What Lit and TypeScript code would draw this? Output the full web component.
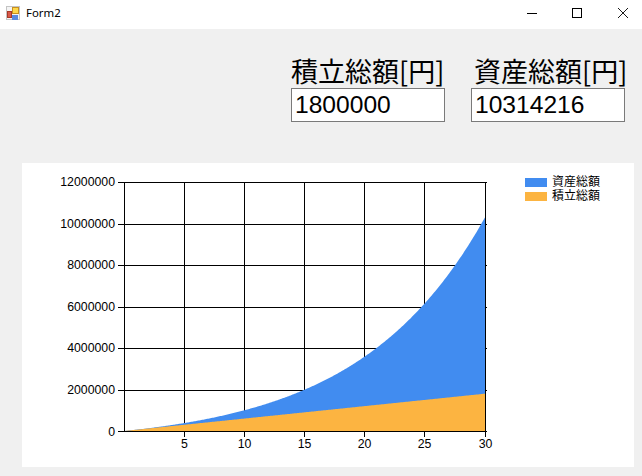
import { LitElement, html, css, svg } from "lit";
import { customElement } from "lit/decorators.js";

const X0 = 124;
const XS = 60.2 / 5;
const Y0 = 431;
const YS = 249 / 12000000;
const px = (v: number) => X0 + v * XS;
const py = (v: number) => Y0 - v * YS;
const rate = Math.pow(1.1, 1 / 12) - 1;

function area(fn: (m: number) => number): string {
  let d = `M${px(0)} ${Y0}`;
  for (let m = 0; m <= 360; m++) d += `L${px(m / 12).toFixed(2)} ${py(fn(m)).toFixed(2)}`;
  return d + `L${px(30)} ${Y0}Z`;
}

const assets = area((m) => (5000 * (Math.pow(1 + rate, m) - 1)) / rate);
const saved = area((m) => 5000 * m);
const xLines = [184, 244, 304, 364, 424, 485];
const xLabels = [5, 10, 15, 20, 25, 30];
const yLines: [number, number, number][] = [
  [0, 431, 436],
  [2000000, 390, 394],
  [4000000, 348, 352],
  [6000000, 307, 311],
  [8000000, 265, 269],
  [10000000, 224, 228],
  [12000000, 182, 186],
];

@customElement("app-root")
export class AppRoot extends LitElement {
  static styles = css`
    :host {
      display: flex;
      flex-direction: column;
      width: 642px;
      height: 476px;
      background: #f0f0f0;
      overflow: hidden;
    }
    .titlebar {
      display: flex;
      align-items: flex-start;
      height: 29px;
      flex: none;
      background: #fff;
      padding-left: 6px;
      box-sizing: border-box;
    }
    .app-icon {
      width: 14px;
      height: 14px;
      margin-top: 6px;
      display: block;
    }
    .title {
      margin-left: 6px;
      margin-top: 5px;
      font: 11.4px/16px "Noto Sans", "Open Sans", sans-serif;
      color: #000;
    }
    .controls {
      margin-left: auto;
      margin-right: -4px;
      display: flex;
    }
    .ctl {
      width: 46px;
      height: 26px;
      display: flex;
      align-items: center;
      justify-content: center;
    }
    .ctl:first-child {
      width: 44px;
    }
    .ctl svg {
      display: block;
    }
    .summary {
      display: flex;
      justify-content: flex-end;
      gap: 26px;
      padding: 26px 17px 0 0;
      height: 134px;
      box-sizing: border-box;
      flex: none;
    }
    .field {
      width: 154px;
      display: flex;
      flex-direction: column;
    }
    .label {
      height: 33px;
      font: 27px/31px "Noto Sans CJK JP", sans-serif;
      color: #000;
      white-space: nowrap;
    }
    .field:last-child .label {
      padding-left: 3px;
    }
    .value {
      height: 34px;
      box-sizing: border-box;
      border: 1px solid #7a7a7a;
      background: #fff;
      font: 24.6px/32px "Liberation Sans", Arial, sans-serif;
      color: #000;
      padding-left: 3px;
    }
    .card {
      margin-left: 22px;
      width: 612px;
      height: 304px;
      background: #fff;
      flex: none;
    }
    .card svg {
      display: block;
    }
    .axis {
      font: 12.3px "Liberation Sans", Arial, sans-serif;
      fill: #000;
    }
    .legend {
      font: 12px "Noto Sans CJK JP", sans-serif;
      fill: #000;
    }
  `;

  render() {
    return html`
      <div class="titlebar">
        <svg class="app-icon" viewBox="0 0 14 14">
          <rect x="0" y="0" width="14" height="14" fill="#c4c4c4" />
          <rect x="1" y="1" width="12" height="12" fill="#f4f4f4" />
          <rect x="6" y="1" width="7" height="7" fill="#c89020" />
          <rect x="7" y="2" width="5" height="5" fill="#ffd84a" />
          <rect x="1" y="5" width="5" height="7" fill="#a83a28" />
          <rect x="2" y="6" width="3" height="5" fill="#d8584a" />
          <rect x="6" y="9" width="6" height="5" fill="#5a8ae0" />
        </svg>
        <span class="title">Form2</span>
        <div class="controls">
          <div class="ctl">
            <svg width="10" height="10" viewBox="0 0 10 10"><path d="M0 5.5H10" stroke="#000" fill="none" /></svg>
          </div>
          <div class="ctl">
            <svg width="10" height="10" viewBox="0 0 10 10"><rect x=".5" y=".5" width="9" height="9" stroke="#000" fill="none" /></svg>
          </div>
          <div class="ctl">
            <svg width="10" height="10" viewBox="0 0 10 10"><path d="M0 0L10 10M10 0L0 10" stroke="#000" stroke-width=".9" fill="none" /></svg>
          </div>
        </div>
      </div>
      <div class="summary">
        <div class="field">
          <div class="label">積立総額[円]</div>
          <div class="value">1800000</div>
        </div>
        <div class="field">
          <div class="label">資産総額[円]</div>
          <div class="value">10314216</div>
        </div>
      </div>
      <div class="card">
        <svg width="612" height="304" viewBox="22 163 612 304">
          ${yLines.map(
            ([v, y, b]) => svg`
              <path d="M118 ${y + 0.5}H487" stroke="#000" fill="none" />
              <text class="axis" x="115" y="${b}" text-anchor="end">${v}</text>`
          )}
          ${xLines.map(
            (x, i) => svg`
              <path d="M${x + 0.5} 182V437" stroke="#000" fill="none" />
              <text class="axis" x="${x + 0.5}" y="448" text-anchor="middle">${xLabels[i]}</text>`
          )}
          <path d="${assets}" fill="#418cf0" />
          <path d="${saved}" fill="#fcb441" />
          <path d="M124.5 182V431.5H485.5V217" stroke="#000" fill="none" />
          <rect x="525" y="178" width="22" height="9" fill="#418cf0" />
          <rect x="525" y="192" width="22" height="9" fill="#fcb441" />
          <text class="legend" x="552" y="186">資産総額</text>
          <text class="legend" x="552" y="200">積立総額</text>
        </svg>
      </div>
    `;
  }
}
